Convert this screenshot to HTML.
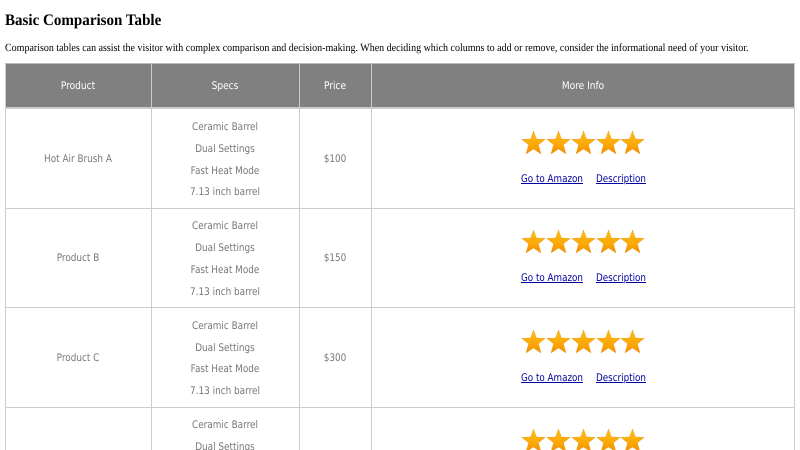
<!DOCTYPE html>
<html><head><meta charset="utf-8">
<style>
html,body{margin:0;padding:0;background:#fff;width:800px;height:450px;overflow:hidden}
body{position:relative;font-family:"Liberation Serif",serif;color:#000;text-rendering:geometricPrecision}
h1{position:absolute;left:5px;top:11px;margin:0;font-size:16px;line-height:20px;font-weight:bold;white-space:nowrap;transform:scaleX(.94);transform-origin:0 0}
p{position:absolute;left:5px;top:41px;margin:0;font-size:11px;line-height:14px;white-space:nowrap;transform:scaleX(.909);transform-origin:0 0}
.b{position:absolute;background:#ccc}
.h{position:absolute;left:5px;top:64px;width:790px;height:44px;background:#808080}
.t{position:absolute;transform:translateX(-50%) scaleX(.845);white-space:nowrap;font-family:"DejaVu Sans",sans-serif;font-size:10.5px;line-height:14px;color:#777;text-align:center}
.w{color:#fff;transform:translateX(-50%) scaleX(.86)}
a{position:absolute;white-space:nowrap;font-family:"DejaVu Sans",sans-serif;font-size:10.5px;line-height:14px;color:#0000a0;text-decoration:underline;transform:scaleX(.835);transform-origin:0 0}
svg{position:absolute;left:520px;width:126px;height:28px}
</style></head><body>
<h1>Basic Comparison Table</h1>
<p>Comparison tables can assist the visitor with complex comparison and decision-making. When deciding which columns to add or remove, consider the informational need of your visitor.</p>
<div class="h"></div>
<div class="b" style="left:5px;top:63px;width:790px;height:1px;background:#bbb"></div>
<div class="b" style="left:5px;top:107px;width:790px;height:2px"></div>
<div class="b" style="left:5px;top:208px;width:790px;height:1px"></div>
<div class="b" style="left:5px;top:307px;width:790px;height:1px"></div>
<div class="b" style="left:5px;top:407px;width:790px;height:1px"></div>
<div class="b" style="left:5px;top:64px;width:1px;height:386px"></div>
<div class="b" style="left:151px;top:64px;width:1px;height:386px"></div>
<div class="b" style="left:299px;top:64px;width:1px;height:386px"></div>
<div class="b" style="left:371px;top:64px;width:1px;height:386px"></div>
<div class="b" style="left:794px;top:64px;width:1px;height:386px"></div>

<div class="t w" style="left:78px;top:79px">Product</div>
<div class="t w" style="left:225px;top:79px">Specs</div>
<div class="t w" style="left:335px;top:79px">Price</div>
<div class="t w" style="left:583px;top:79px">More Info</div>

<svg width="0" height="0" style="width:0;height:0"><defs>
<linearGradient id="g" x1="0" y1="0" x2="0" y2="1"><stop offset="0" stop-color="#ffbe10"/><stop offset=".6" stop-color="#fba806"/><stop offset="1" stop-color="#f08c00"/></linearGradient>
<g id="s"><path d="M12.5 2L15.4 10L24.2 10.4L17.4 15.8L20 25L12.5 20L5 25L7.6 15.8L.8 10.4L9.6 10Z" fill="url(#g)" stroke="#e8981e" stroke-width=".4"/></g>
<g id="r"><use href="#s" x="1"/><use href="#s" x="26"/><use href="#s" x="51"/><use href="#s" x="76"/><use href="#s" x="100"/></g>
</defs></svg>

<div class="t" style="left:78px;top:152px">Hot Air Brush A</div>
<div class="t" style="left:225px;top:120px">Ceramic Barrel</div>
<div class="t" style="left:225px;top:142px">Dual Settings</div>
<div class="t" style="left:225px;top:164px">Fast Heat Mode</div>
<div class="t" style="left:225px;top:185px">7.13 inch barrel</div>
<div class="t" style="left:335px;top:152px">$100</div>
<svg style="top:129px"><use href="#r"/></svg>
<a href="#" style="left:521px;top:172px">Go to Amazon</a>
<a href="#" style="left:596px;top:172px">Description</a>

<div class="t" style="left:78px;top:251px">Product B</div>
<div class="t" style="left:225px;top:219px">Ceramic Barrel</div>
<div class="t" style="left:225px;top:241px">Dual Settings</div>
<div class="t" style="left:225px;top:263px">Fast Heat Mode</div>
<div class="t" style="left:225px;top:285px">7.13 inch barrel</div>
<div class="t" style="left:335px;top:251px">$150</div>
<svg style="top:228px"><use href="#r"/></svg>
<a href="#" style="left:521px;top:271px">Go to Amazon</a>
<a href="#" style="left:596px;top:271px">Description</a>

<div class="t" style="left:78px;top:351px">Product C</div>
<div class="t" style="left:225px;top:319px">Ceramic Barrel</div>
<div class="t" style="left:225px;top:341px">Dual Settings</div>
<div class="t" style="left:225px;top:362px">Fast Heat Mode</div>
<div class="t" style="left:225px;top:384px">7.13 inch barrel</div>
<div class="t" style="left:335px;top:351px">$300</div>
<svg style="top:328px"><use href="#r"/></svg>
<a href="#" style="left:521px;top:371px">Go to Amazon</a>
<a href="#" style="left:596px;top:371px">Description</a>

<div class="t" style="left:225px;top:418px">Ceramic Barrel</div>
<div class="t" style="left:225px;top:440px">Dual Settings</div>
<svg style="top:427px"><use href="#r"/></svg>
</body></html>
